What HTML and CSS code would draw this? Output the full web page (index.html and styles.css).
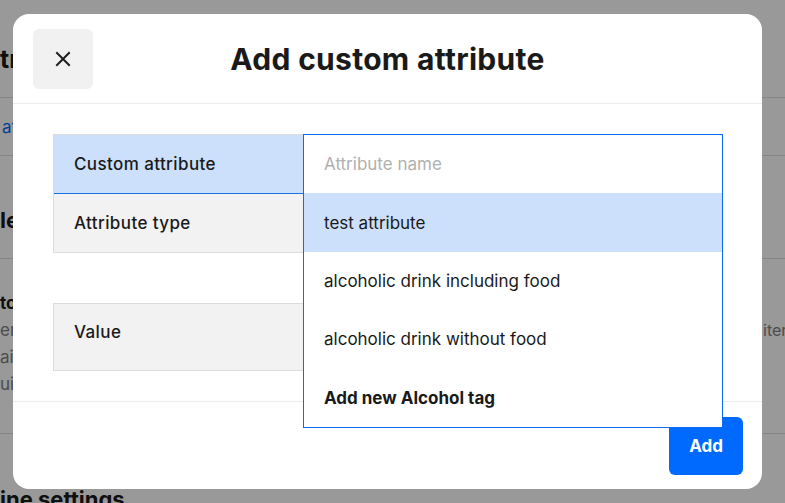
FILE: index.html
```html
<!DOCTYPE html>
<html lang="en">
<head>
<meta charset="utf-8">
<title>Add custom attribute</title>
<link rel="stylesheet" href="styles.css">
</head>
<body>
<div class="bg-page">
  <section class="bg-sec sec-a"><h1 class="bg-h1">tributes</h1></section>
  <section class="bg-sec sec-b"><a class="bg-link">ate custom attribute</a></section>
  <section class="bg-sec sec-c"><h2 class="bg-h2">les</h2></section>
  <section class="bg-sec sec-d">
    <h3 class="bg-h3">tom attributes</h3>
    <div class="bg-line"><span>ery item</span><span class="bg-right">iter</span></div>
    <div class="bg-line"><span>ailable</span><span></span></div>
    <div class="bg-line"><span>uired</span><span></span></div>
  </section>
  <section class="bg-sec sec-e"><h2 class="bg-h2b">ine settings</h2></section>
</div>
<div class="overlay"></div>

<div class="modal">
  <header class="modal-head">
    <button class="close-btn" aria-label="Close">
      <svg width="16" height="16" viewBox="0 0 16 16"><path d="M2 2L14 14M14 2L2 14" stroke="#1f1f1f" stroke-width="2" stroke-linecap="square"/></svg>
    </button>
    <h1 class="modal-title">Add custom attribute</h1>
    <div class="head-spacer"></div>
  </header>

  <div class="modal-body">
    <div class="field-group">
      <div class="row row-active"><div class="label">Custom attribute</div><div class="cell"></div></div>
      <div class="row"><div class="label">Attribute type</div><div class="cell"></div></div>
    </div>
    <div class="field-group value-group">
      <div class="row row-value"><div class="label">Value</div><div class="cell"></div></div>
    </div>
  </div>

  <footer class="modal-foot">
    <button class="add-btn">Add</button>
  </footer>

  <div class="dropdown">
    <div class="opt placeholder">Attribute name</div>
    <div class="opt highlighted">test attribute</div>
    <div class="opt">alcoholic drink including food</div>
    <div class="opt">alcoholic drink without food</div>
    <div class="opt strong">Add new Alcohol tag</div>
  </div>
</div>
</body>
</html>
```

FILE: styles.css
```css
* { box-sizing: border-box; }
html, body { margin: 0; padding: 0; }
body {
  width: 785px;
  height: 503px;
  overflow: hidden;
  background: #ffffff;
  font-family: "Inter", "Liberation Sans", Arial, sans-serif;
  color: #1a1a1a;
  position: relative;
}

/* background page */
.bg-page { width: 785px; }
.bg-sec { border-bottom: 1px solid #dedede; }
.sec-a { height: 98px; padding-top: 44px; }
.bg-h1 { margin: 0; font-size: 25px; font-weight: 700; line-height: 30px; color: #1a1a1a; white-space: nowrap; }
.sec-b { height: 58px; padding-top: 17px; }
.bg-link { color: #006aff; font-size: 17px; line-height: 24px; padding-left: 2px; white-space: nowrap; }
.sec-c { height: 103px; padding-top: 50px; }
.bg-h2 { margin: 0; font-size: 22px; font-weight: 700; line-height: 28px; }
.sec-d { height: 175px; padding-top: 31px; }
.bg-h3 { margin: 0 0 1px; font-size: 17px; font-weight: 700; line-height: 26px; white-space: nowrap; }
.bg-line {
  display: grid;
  grid-template-columns: 763px 22px;
  font-size: 17px;
  line-height: 27px;
  color: #808080;
  white-space: nowrap;
}
.bg-right { font-size: 16px; }
.sec-e { border-bottom: none; padding-top: 51px; }
.bg-h2b { margin: 0; font-size: 22px; font-weight: 700; line-height: 28px; white-space: nowrap; }

.overlay {
  position: absolute;
  inset: 0;
  background: rgba(0, 0, 0, 0.4);
}

/* modal */
.modal {
  position: absolute;
  left: 13px;
  top: 14px;
  width: 749px;
  height: 475px;
  background: #ffffff;
  border-radius: 16px;
  display: flex;
  flex-direction: column;
}
.modal-head {
  height: 90px;
  border-bottom: 1px solid #ececec;
  display: grid;
  grid-template-columns: 60px 1fr 60px;
  align-items: center;
  padding: 0 20px;
}
.close-btn {
  width: 60px;
  height: 60px;
  border: none;
  border-radius: 6px;
  background: #f1f1f1;
  display: flex;
  align-items: center;
  justify-content: center;
  padding: 0;
  margin-top: 1px;
}
.close-btn svg { display: block; }
.modal-title {
  margin: 0;
  text-align: center;
  font-size: 30px;
  font-weight: 700;
  letter-spacing: 0.3px;
  color: #1a1a1a;
  line-height: 36px;
}

.modal-body {
  padding: 30px 40px 30px;
}
.field-group {
  border: 1px solid #dcdcdc;
  width: 670px;
}
.row { display: flex; height: 58px; border-bottom: 1px solid #dcdcdc; background: #f2f2f2; }
.row:last-child { border-bottom: none; }
.row-active { background: #cce0fc; border-bottom: 1px solid #1b6fe0; height: 59px; }
.row-value { height: 66px; align-items: flex-start; }
.label {
  width: 249px;
  padding: 16px 20px 0;
  font-size: 17px;
  font-weight: 500;
  letter-spacing: 0.4px;
  line-height: 24px;
  color: #1a1a1a;
}
.row:not(.row-value) .label { padding-top: 17px; }
.cell { flex: 1; background: #ffffff; }
.row-active .cell { background: #cce0fc; }
.value-group { margin-top: 50px; }

.modal-foot {
  border-top: 1px solid #ececec;
  flex: 1;
  display: flex;
  justify-content: flex-end;
  align-items: center;
  padding: 0 19px 0 0;
}
.add-btn {
  width: 74px;
  height: 58px;
  border: none;
  border-radius: 6px;
  background: #006aff;
  color: #ffffff;
  font-family: "Inter", "Liberation Sans", Arial, sans-serif;
  font-size: 17px;
  font-weight: 700;
  margin-top: 1px;
}

/* dropdown overlays the form rows */
.dropdown {
  position: absolute;
  left: 290px;
  top: 120px;
  width: 420px;
  height: 294px;
  border: 1px solid #0a6cf5;
  background: #ffffff;
  display: flex;
  flex-direction: column;
}
.opt {
  height: 58.4px;
  display: flex;
  align-items: center;
  padding: 0 20px;
  font-size: 17px;
  font-weight: 400;
  color: #1a1a1a;
}
.opt.placeholder { color: #b0b0b0; }
.opt.highlighted { background: #cce0fc; }
.opt.strong { font-weight: 700; }
```
